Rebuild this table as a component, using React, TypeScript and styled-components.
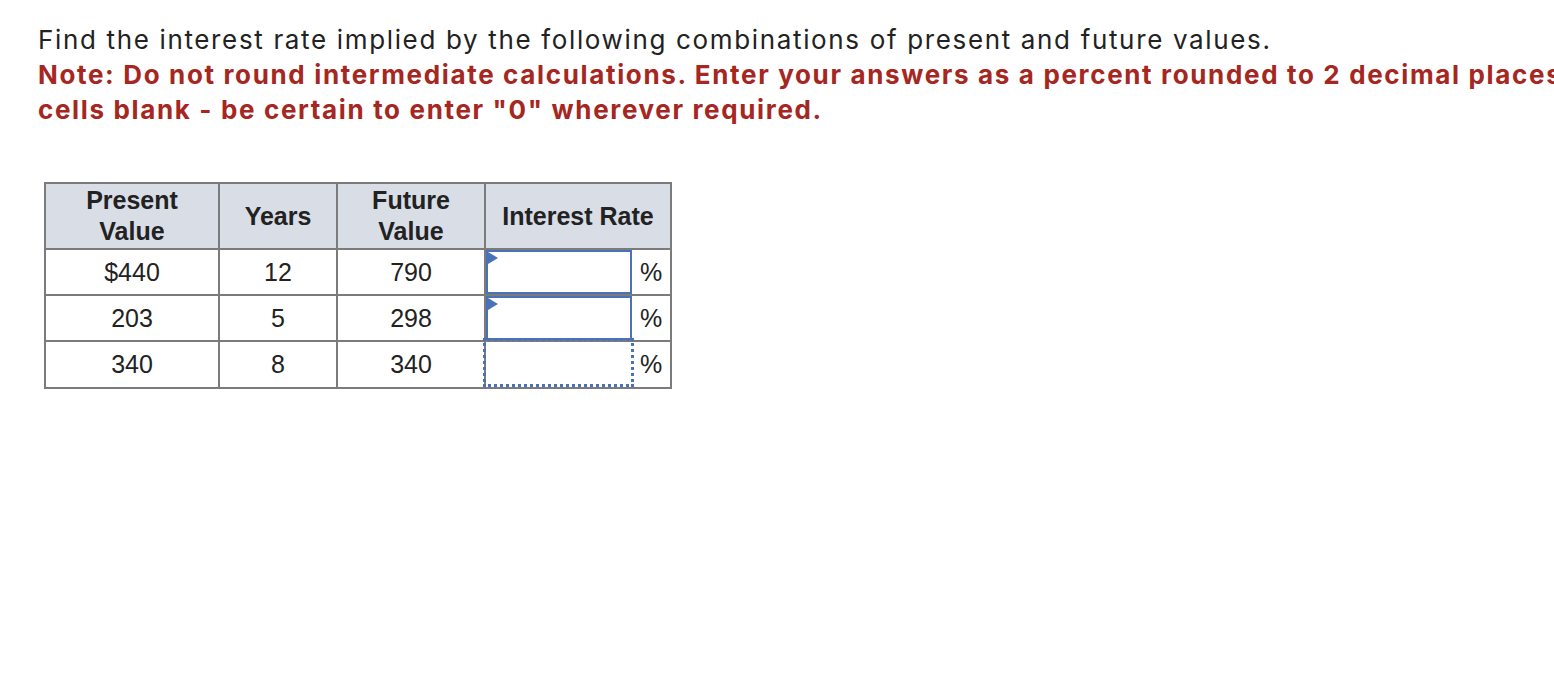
import React from 'react';
import styled, { createGlobalStyle } from 'styled-components';

const GlobalStyle = createGlobalStyle`
  html, body {
    margin: 0;
    padding: 0;
    background: #ffffff;
    overflow: hidden;
  }
`;

const Page = styled.div`
  padding: 22px 0 0 38px;
  width: 1516px;
  overflow: hidden;
`;

const Prompt = styled.p`
  margin: 0;
  font-family: Inter, Lato, sans-serif;
  font-size: 26px;
  letter-spacing: 1.65px;
  line-height: 35px;
  color: #222222;
  white-space: nowrap;
`;

const Note = styled.p`
  margin: 0;
  font-family: Inter, Lato, sans-serif;
  font-weight: 700;
  font-size: 26px;
  letter-spacing: 1.65px;
  line-height: 35px;
  color: #a5271f;
  white-space: nowrap;
`;

const Table = styled.table`
  margin: 55px 0 0 6px;
  width: 626px;
  table-layout: fixed;
  border-collapse: collapse;
  border: 2px solid #7b7b7b;
  font-family: "Liberation Sans", Arial, sans-serif;
  font-size: 25px;
  color: #222222;
`;

const HeadCell = styled.th`
  height: 64px;
  padding: 0;
  background: #d9dde6;
  border: 2px solid #7b7b7b;
  font-weight: 700;
  line-height: 31px;
  text-align: center;
`;

const Cell = styled.td`
  height: 44px;
  padding: 0;
  border: 2px solid #7b7b7b;
  text-align: center;
  vertical-align: middle;
`;

const InputCell = styled.td`
  height: 44px;
  padding: 0;
  border-top: 2px solid #7b7b7b;
  border-bottom: 2px solid #7b7b7b;
  border-left: 2px solid #7b7b7b;
  vertical-align: middle;
`;

const PercentCell = styled.td`
  height: 44px;
  padding: 0;
  border-top: 2px solid #7b7b7b;
  border-bottom: 2px solid #7b7b7b;
  text-align: center;
  vertical-align: middle;
`;

const AnswerBox = styled.div<{ dotted?: boolean }>`
  position: relative;
  box-sizing: border-box;
  height: ${p => (p.dotted ? 49 : 44)}px;
  width: ${p => (p.dotted ? 151 : 146)}px;
  margin-left: ${p => (p.dotted ? -3 : 0)}px;
  margin-top: ${p => (p.dotted ? -4 : 0)}px;
  border: ${p => (p.dotted ? '3px dotted #4a72b8' : '2px solid #4a72b8')};
  background: ${p => (p.dotted ? 'transparent' : '#ffffff')};
`;

const Flag = styled.span`
  position: absolute;
  top: 0;
  left: 0;
  width: 0;
  height: 0;
  border-top: 6px solid transparent;
  border-bottom: 6px solid transparent;
  border-left: 10px solid #4a72b8;
`;

const rows = [
  { pv: '$440', years: '12', fv: '790', dotted: false },
  { pv: '203', years: '5', fv: '298', dotted: false },
  { pv: '340', years: '8', fv: '340', dotted: true },
];

const App: React.FC = () => {
  return (
    <Page>
      <GlobalStyle />
      <Prompt>Find the interest rate implied by the following combinations of present and future values.</Prompt>
      <Note>
        Note: Do not round intermediate calculations. Enter your answers as a percent rounded to 2 decimal places, e.g., 32.16. Leave no
        <br />
        cells blank - be certain to enter "0" wherever required.
      </Note>

      <Table>
        <colgroup>
          <col style={{ width: 174 }} />
          <col style={{ width: 118 }} />
          <col style={{ width: 148 }} />
          <col style={{ width: 147 }} />
          <col style={{ width: 39 }} />
        </colgroup>
        <thead>
          <tr>
            <HeadCell>Present<br />Value</HeadCell>
            <HeadCell>Years</HeadCell>
            <HeadCell>Future<br />Value</HeadCell>
            <HeadCell colSpan={2}>Interest Rate</HeadCell>
          </tr>
        </thead>
        <tbody>
          {rows.map(r => (
            <tr key={r.pv}>
              <Cell>{r.pv}</Cell>
              <Cell>{r.years}</Cell>
              <Cell>{r.fv}</Cell>
              <InputCell>
                <AnswerBox dotted={r.dotted}>{!r.dotted && <Flag />}</AnswerBox>
              </InputCell>
              <PercentCell>%</PercentCell>
            </tr>
          ))}
        </tbody>
      </Table>
    </Page>
  );
};

export default App;
